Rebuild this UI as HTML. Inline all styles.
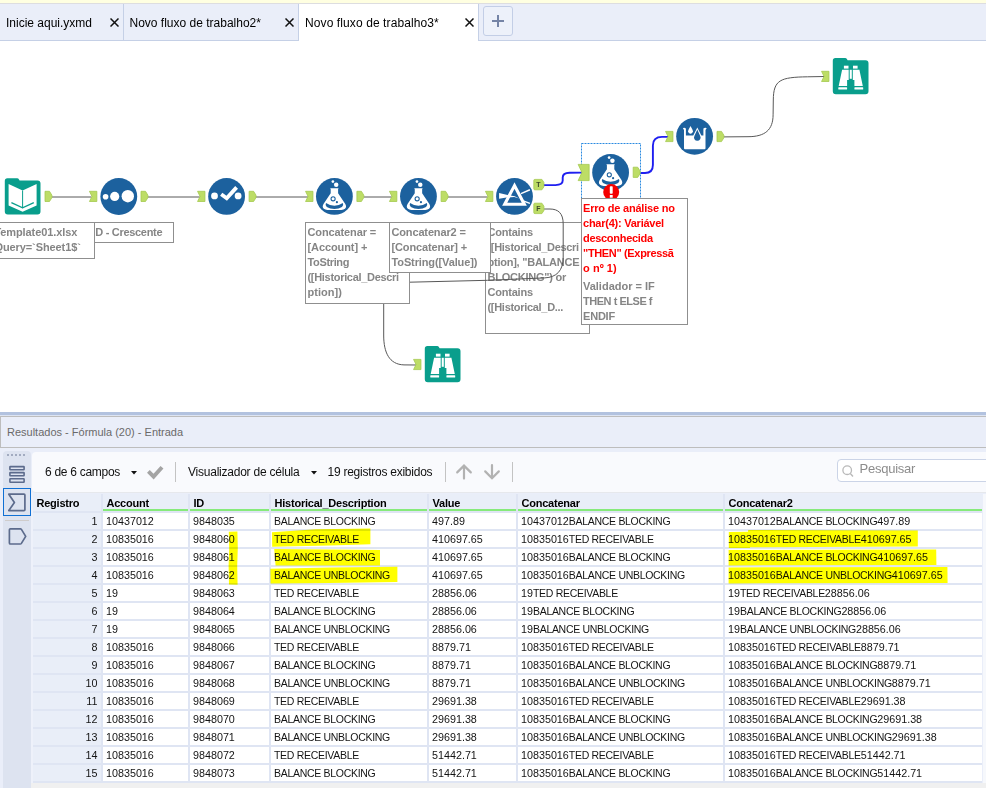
<!DOCTYPE html>
<html>
<head>
<meta charset="utf-8">
<title>Alteryx</title>
<style>
*{box-sizing:border-box;margin:0;padding:0}
html,body{width:986px;height:788px;overflow:hidden;background:#fff;font-family:"Liberation Sans",sans-serif;}
body{position:relative}
.abs{position:absolute}
/* top */
#ystrip{left:0;top:0;width:986px;height:3px;background:#ffffe1}
#tabbar{left:0;top:3px;width:986px;height:38px;background:#eaeef9;border-bottom:1px solid #c5d0e6;border-top:1px solid #dddde0}
.tab{top:4px;height:38px;font-size:12px;color:#000;line-height:38px;white-space:nowrap}
.tabx{top:18px;width:9px;height:9px}
/* canvas */
#canvas{left:0;top:41px;width:986px;height:371px;background:#fff;overflow:hidden}
.ann{position:absolute;background:#fff;border:1px solid #8f8f8f;font-weight:bold;font-size:11px;line-height:15px;color:#858585;white-space:nowrap;overflow:hidden;padding:2px 0 0 1.5px}
/* results */
#split{left:0;top:412px;width:986px;height:4px;background:#b2c2df;border-bottom:1px solid #dde4f2}
#rtitle{z-index:2;left:0;top:416px;width:990px;height:32px;background:#eaeef9;border:1px solid #bdbdbd;font-size:11px;color:#6a6a6a;line-height:30px;padding-left:6px;white-space:nowrap}
#rbody{left:0;top:447px;width:986px;height:341px;background:#eaeef9}
.tbtxt{font-size:12px;color:#111;white-space:nowrap;line-height:14px}
/* table */
.row{position:absolute;left:33px;height:16px;width:949px}
.c{position:absolute;top:0;height:16px;background:#fff;font-size:11px;line-height:16px;color:#141414;white-space:nowrap;overflow:hidden;padding-left:3px}
.c0{left:0;width:68px;background:#e9eef8;text-align:right;padding-right:3.5px;padding-left:0}
.c1{left:70px;width:85px}
.c2{left:157px;width:79px}
.c3{left:238px;width:156px}
.c4{left:396px;width:87px}
.c5{left:485px;width:205px}
.c6{left:692px;width:257px}
.c i{font-style:normal;letter-spacing:-0.3px;font-size:10.5px}
.c{font-size:10.75px}
.hd .c{font-size:11px;letter-spacing:-0.22px;color:#000;padding-top:1px;padding-left:3.5px;background:#e9eef8;font-weight:bold;height:17px;line-height:16px}
</style>
</head>
<body>
<div id="ystrip" class="abs"></div>
<div id="tabbar" class="abs"></div>
<div class="abs" style="left:123px;top:4px;width:1px;height:36px;background:#c5d0e6"></div>
<div class="abs" style="left:298px;top:4px;width:181px;height:37px;background:#fff;border-left:1px solid #c5d0e6;border-right:1px solid #c5d0e6"></div>
<div class="abs tab" style="left:6px">Inicie aqui.yxmd</div>
<div class="abs tab" style="left:129.5px">Novo fluxo de trabalho2*</div>
<div class="abs tab" style="left:305px;color:#000;letter-spacing:0.1px">Novo fluxo de trabalho3*</div>
<svg class="abs tabx" style="left:110px" viewBox="0 0 9 9"><path d="M0.5,0.5 L8.5,8.5 M8.5,0.5 L0.5,8.5" stroke="#111" stroke-width="1.5" fill="none"/></svg>
<svg class="abs tabx" style="left:285px" viewBox="0 0 9 9"><path d="M0.5,0.5 L8.5,8.5 M8.5,0.5 L0.5,8.5" stroke="#111" stroke-width="1.5" fill="none"/></svg>
<svg class="abs tabx" style="left:465px" viewBox="0 0 9 9"><path d="M0.5,0.5 L8.5,8.5 M8.5,0.5 L0.5,8.5" stroke="#111" stroke-width="1.5" fill="none"/></svg>
<div class="abs" style="left:483px;top:6px;width:30px;height:30px;border:1px solid #c3cee6;border-radius:3px;background:#edf1fa"></div>
<div class="abs" style="left:492px;top:20px;width:12px;height:2px;background:#7584a6"></div>
<div class="abs" style="left:497px;top:15px;width:2px;height:12px;background:#7584a6"></div>

<div id="canvas" class="abs">
<div class="abs" style="left:0;top:-41px;width:986px;height:453px">
<div class="ann" style="left:485px;top:222px;width:105px;height:112px;padding-left:1.5px"><span style="letter-spacing:-0.21px">Contains</span><br><span style="letter-spacing:-0.31px">([Historical_Descri</span><br><span style="letter-spacing:-0.24px">ption], "BALANCE</span><br><span style="letter-spacing:-0.24px">BLOCKING") or</span><br><span style="letter-spacing:-0.21px">Contains</span><br><span style="letter-spacing:-0.3px">([Historical_D...</span></div>
<svg class="abs" style="left:0;top:0" width="986" height="412" viewBox="0 0 986 412">
<g fill="none" stroke="#585858" stroke-width="1">
<path d="M51.9,197 L91.5,197"/>
<path d="M147.6,197 L199.8,197"/>
<path d="M255.9,197 L308,197"/>
<path d="M363.6,197 L391.8,197"/>
<path d="M448,197 L487.8,197"/>
<path d="M543.5,209 L550,209 C558,209.1 563.2,213 563.2,224 L563.2,257 C563.2,271 556.5,277.2 544.8,277.9 L487.6,280.3 L409.6,282.2 L400,282.5 C388,283 383.7,288 383.7,300 L383.7,336 C383.8,352 389,364.5 404,364.9 L416.5,365"/>
<path d="M723.7,136.9 L748,136.7 C765,136.7 773,130 773.1,114.8 L773.3,100 C773.5,80 780,77.2 807.6,76.8 L824.7,76.5"/>
</g>
<g fill="none" stroke="#1f1ff0" stroke-width="1.9">
<path d="M543.5,185.1 L555.5,185.1 Q562.7,185.1 562.7,180.6 L562.7,177.4 Q562.7,172.8 569.5,172.7 L581.7,172.6"/>
<path d="M639.8,173 L645,173 Q652.9,173 652.9,165 L652.9,145.5 Q652.9,136.9 662,136.9 L668.9,136.9"/>
</g>
</svg>
<div class="ann" style="left:94px;top:222px;width:80px;height:21px;padding-left:0;letter-spacing:-0.3px;text-indent:-2.5px">ID - Crescente</div>
<div class="ann" style="left:-8px;top:222px;width:103px;height:37px;padding-left:1.5px;letter-spacing:-0.1px">Template01.xlsx<br>Query=`Sheet1$`</div>
<div class="ann" style="left:305px;top:222px;width:105px;height:82px;"><span style="letter-spacing:-0.12px">Concatenar =</span><br><span style="letter-spacing:-0.09px">[Account] +</span><br><span style="letter-spacing:-0.35px">ToString</span><br><span style="letter-spacing:-0.31px">([Historical_Descri</span><br><span style="letter-spacing:0.03px">ption])</span></div>
<div class="ann" style="left:389px;top:222px;width:102px;height:51px;"><span style="letter-spacing:-0.15px">Concatenar2 =</span><br><span style="letter-spacing:-0.12px">[Concatenar] +</span><br><span style="letter-spacing:-0.12px">ToString([Value])</span></div>
<svg class="abs" style="left:0;top:0" width="986" height="412" viewBox="0 0 986 412">
<path d="M6.8,178.3 L17.1,178.3 Q18.4,178.3 19.0,179.4 L19.6,180.4 L37.5,180.4 Q40.5,180.4 40.5,183.4 L40.5,211.4 Q40.5,214.4 37.5,214.4 L7.8,214.4 Q4.8,214.4 4.8,211.4 L4.8,180.9 Q4.8,178.3 7.4,178.3 Z" fill="#099e8c"/>
<g><path d="M8.6,184 L22.6,190.5 L36.6,184 L36.6,205.6 L22.6,211.8 L8.6,205.6 Z" fill="#fff"/><path d="M22.6,190.5 L22.6,208.2" stroke="#099e8c" stroke-width="1" fill="none"/><path d="M11.4,202.6 L22.6,207.9 L33.8,202.6" stroke="#099e8c" stroke-width="1.3" fill="none"/></g>
<path d="M45.0,191.3 L49.50,191.3 L51.90,195.20000000000002 L51.90,197.6 L49.50,201.5 L45.0,201.5 Z" fill="#bddd66" stroke="#a5c94f" stroke-width="0.8"/>
<path d="M89.45,191.3 L96.85,191.3 L96.85,201.5 L89.45,201.5 L91.95,196.4 Z" fill="#bddd66" stroke="#a5c94f" stroke-width="0.8"/>
<circle cx="118.8" cy="196.5" r="18.4" fill="#1c619e"/>
<path d="M141.0,191.3 L145.50,191.3 L147.90,195.20000000000002 L147.90,197.6 L145.50,201.5 L141.0,201.5 Z" fill="#bddd66" stroke="#a5c94f" stroke-width="0.8"/>
<circle cx="105.6" cy="196.8" r="2.8" fill="#fff"/><circle cx="114.7" cy="196.4" r="4.6" fill="#fff"/><circle cx="127.8" cy="196.2" r="6.2" fill="#fff"/>
<path d="M197.55,191.3 L204.95,191.3 L204.95,201.5 L197.55,201.5 L200.05,196.4 Z" fill="#bddd66" stroke="#a5c94f" stroke-width="0.8"/>
<circle cx="226.6" cy="196.4" r="18.4" fill="#1c619e"/>
<path d="M249.1,191.3 L253.60,191.3 L256.00,195.20000000000002 L256.00,197.6 L253.60,201.5 L249.1,201.5 Z" fill="#bddd66" stroke="#a5c94f" stroke-width="0.8"/>
<circle cx="214.5" cy="195.9" r="3.4" fill="#fff"/><circle cx="238.1" cy="195.9" r="3.4" fill="#fff"/><path d="M221.2,194.3 L226.7,198.3 L236.6,187.4" fill="none" stroke="#fff" stroke-width="3.8"/>
<path d="M305.54999999999995,191.3 L312.95,191.3 L312.95,201.5 L305.54999999999995,201.5 L308.05,196.4 Z" fill="#bddd66" stroke="#a5c94f" stroke-width="0.8"/>
<circle cx="334.4" cy="196.4" r="18.4" fill="#1c619e"/>
<path d="M356.9,191.3 L361.40,191.3 L363.80,195.20000000000002 L363.80,197.6 L361.40,201.5 L356.9,201.5 Z" fill="#bddd66" stroke="#a5c94f" stroke-width="0.8"/>
<g transform="translate(334.4,196.4)">
<path d="M-4.2,-8.2 L4.2,-8.2 L3.7,-7.2 L3.7,-3.2 L10.9,7.6 Q12.6,10.6 10.6,12.4 Q9.2,13.5 7,13.5 L-7,13.5 Q-9.2,13.5 -10.6,12.4 Q-12.6,10.6 -10.9,7.6 L-3.7,-3.2 L-3.7,-7.2 Z" fill="#fff"/>
<path d="M-8.4,6.6 Q0,12.2 8.4,6.6 Q9.6,8.8 7.6,10.6 Q4.4,12.6 0,12.6 Q-4.4,12.6 -7.6,10.6 Q-9.6,8.8 -8.4,6.6 Z" fill="#1c619e"/>
<circle cx="-1.3" cy="2.4" r="2.05" fill="#fff" stroke="#1c619e" stroke-width="1.1"/>
<circle cx="2.5" cy="5.8" r="1.1" fill="#1c619e"/>
<circle cx="-1.5" cy="-14.8" r="1.35" fill="#fff"/>
<circle cx="1.8" cy="-11.6" r="2.25" fill="#fff"/>
</g>
<path d="M389.45,191.3 L396.85,191.3 L396.85,201.5 L389.45,201.5 L391.95,196.4 Z" fill="#bddd66" stroke="#a5c94f" stroke-width="0.8"/>
<circle cx="418.45" cy="196.4" r="18.4" fill="#1c619e"/>
<path d="M441.09999999999997,191.3 L445.60,191.3 L448.00,195.20000000000002 L448.00,197.6 L445.60,201.5 L441.09999999999997,201.5 Z" fill="#bddd66" stroke="#a5c94f" stroke-width="0.8"/>
<g transform="translate(418.45,196.4)">
<path d="M-4.2,-8.2 L4.2,-8.2 L3.7,-7.2 L3.7,-3.2 L10.9,7.6 Q12.6,10.6 10.6,12.4 Q9.2,13.5 7,13.5 L-7,13.5 Q-9.2,13.5 -10.6,12.4 Q-12.6,10.6 -10.9,7.6 L-3.7,-3.2 L-3.7,-7.2 Z" fill="#fff"/>
<path d="M-8.4,6.6 Q0,12.2 8.4,6.6 Q9.6,8.8 7.6,10.6 Q4.4,12.6 0,12.6 Q-4.4,12.6 -7.6,10.6 Q-9.6,8.8 -8.4,6.6 Z" fill="#1c619e"/>
<circle cx="-1.3" cy="2.4" r="2.05" fill="#fff" stroke="#1c619e" stroke-width="1.1"/>
<circle cx="2.5" cy="5.8" r="1.1" fill="#1c619e"/>
<circle cx="-1.5" cy="-14.8" r="1.35" fill="#fff"/>
<circle cx="1.8" cy="-11.6" r="2.25" fill="#fff"/>
</g>
<path d="M485.45,191.3 L492.85,191.3 L492.85,201.5 L485.45,201.5 L487.95,196.4 Z" fill="#bddd66" stroke="#a5c94f" stroke-width="0.8"/>
<circle cx="514.5" cy="196.4" r="18.4" fill="#1c619e"/>
<path d="M514.5,185.6 L504.7,204.2 L524.3,204.2 Z" fill="none" stroke="#fff" stroke-width="3.1" stroke-linejoin="miter"/>
<path d="M499.1,193 L507.6,194.9 L514.6,196.2 L519.2,198.4 L514.2,196.9 L506.4,197.6 L499.1,198.8 Z" fill="#fff"/>
<path d="M521,193.6 L529.9,189.7 M523.2,200.9 L529.9,203.4" stroke="#fff" stroke-width="1.5" fill="none"/>
<path d="M534.8,179.4 L541.90,179.4 L543.90,182.40 L543.90,186.80 L541.90,189.79999999999998 L534.8,189.79999999999998 Q533.8,189.79999999999998 533.8,188.79999999999998 L533.8,180.4 Q533.8,179.4 534.8,179.4 Z" fill="#bddd66" stroke="#a5c94f" stroke-width="0.8"/><text x="538.5" y="186.79999999999998" font-family="Liberation Sans" font-weight="bold" font-size="7" fill="#3b4729" text-anchor="middle">T</text>
<path d="M534.8,203.20000000000002 L541.90,203.20000000000002 L543.90,206.20 L543.90,210.60 L541.90,213.6 L534.8,213.6 Q533.8,213.6 533.8,212.6 L533.8,204.20000000000002 Q533.8,203.20000000000002 534.8,203.20000000000002 Z" fill="#bddd66" stroke="#a5c94f" stroke-width="0.8"/><text x="538.5" y="210.6" font-family="Liberation Sans" font-weight="bold" font-size="7" fill="#3b4729" text-anchor="middle">F</text>
<rect x="581.5" y="143.5" width="59" height="60" fill="none" stroke="#2a8ae0" stroke-width="1" stroke-dasharray="2,1"/>
<path d="M578.15,164.4 L589.15,164.4 L589.15,180.6 L578.15,180.6 L581.95,172.5 Z" fill="#bddd66" stroke="#a5c94f" stroke-width="0.8"/>
<circle cx="610.6" cy="172.4" r="18.4" fill="#1c619e"/>
<path d="M633.2,167.20000000000002 L637.70,167.20000000000002 L640.10,171.10000000000002 L640.10,173.5 L637.70,177.4 L633.2,177.4 Z" fill="#bddd66" stroke="#a5c94f" stroke-width="0.8"/>
<g transform="translate(610.6,172.4)">
<path d="M-4.2,-8.2 L4.2,-8.2 L3.7,-7.2 L3.7,-3.2 L10.9,7.6 Q12.6,10.6 10.6,12.4 Q9.2,13.5 7,13.5 L-7,13.5 Q-9.2,13.5 -10.6,12.4 Q-12.6,10.6 -10.9,7.6 L-3.7,-3.2 L-3.7,-7.2 Z" fill="#fff"/>
<path d="M-8.4,6.6 Q0,12.2 8.4,6.6 Q9.6,8.8 7.6,10.6 Q4.4,12.6 0,12.6 Q-4.4,12.6 -7.6,10.6 Q-9.6,8.8 -8.4,6.6 Z" fill="#1c619e"/>
<circle cx="-1.3" cy="2.4" r="2.05" fill="#fff" stroke="#1c619e" stroke-width="1.1"/>
<circle cx="2.5" cy="5.8" r="1.1" fill="#1c619e"/>
<circle cx="-1.5" cy="-14.8" r="1.35" fill="#fff"/>
<circle cx="1.8" cy="-11.6" r="2.25" fill="#fff"/>
</g>
<circle cx="611.2" cy="192.1" r="8" fill="#f40000"/><rect x="609.8" y="186.2" width="2.9" height="7.6" rx="0.7" fill="#fff"/><rect x="609.8" y="195" width="2.9" height="2.7" fill="#fff"/>
<path d="M665.55,131.4 L672.95,131.4 L672.95,141.6 L665.55,141.6 L668.05,136.5 Z" fill="#bddd66" stroke="#a5c94f" stroke-width="0.8"/>
<circle cx="694.6" cy="136.3" r="18.4" fill="#1c619e"/>
<path d="M717.0,131.4 L721.50,131.4 L723.90,135.3 L723.90,137.7 L721.50,141.6 L717.0,141.6 Z" fill="#bddd66" stroke="#a5c94f" stroke-width="0.8"/>
<path d="M682.9,128.3 Q683.5,127.6 684.4,127.8 L685.9,128.6 L685.9,135.5 L703.4,135.5 L703.4,128.6 L705,127.8 Q706,127.6 706.7,128.3 L705.5,129.9 L705.5,148.2 Q705.5,149.2 704.5,149.2 L685,149.2 Q684,149.2 684,148.2 L684,129.9 Z" fill="#fff"/>
<path d="M690.5,126 L692.5,129.8 A2.45,2.45 0 1 1 688.5,129.8 Z" fill="#fff"/>
<path d="M697.3,127.4 L701.2,135.3 A4.4,4.4 0 1 1 693.4,135.3 Z" fill="#fff"/>
<path d="M697.3,129.4 L700.2,135.9 A3.3,3.3 0 1 1 694.4,135.9 Z" fill="#1c619e"/>
<path d="M821.55,71.30000000000001 L828.95,71.30000000000001 L828.95,81.5 L821.55,81.5 L824.05,76.4 Z" fill="#bddd66" stroke="#a5c94f" stroke-width="0.8"/>
<path d="M834.8,58.1 L845.0999999999999,58.1 Q846.4,58.1 847.0,59.2 L847.5999999999999,60.2 L865.5,60.2 Q868.5,60.2 868.5,63.2 L868.5,91.2 Q868.5,94.2 865.5,94.2 L835.8,94.2 Q832.8,94.2 832.8,91.2 L832.8,60.7 Q832.8,58.1 835.4,58.1 Z" fill="#099e8c"/>
<g transform="translate(832.8,58.1)" fill="#fff"><rect x="11.1" y="7.6" width="4.6" height="2.9"/><rect x="20.2" y="7.6" width="4.6" height="2.9"/><path d="M9.3,11.7 L15.9,11.7 L15.9,21.9 L14.3,21.9 L14.3,27.8 L5.9,27.8 Z"/><path d="M26.6,11.7 L20,11.7 L20,21.9 L21.6,21.9 L21.6,27.8 L30,27.8 Z"/><rect x="16.9" y="11.7" width="2.1" height="9"/><rect x="5.5" y="29.1" width="8.8" height="2.3" rx="0.6"/><rect x="21.6" y="29.1" width="8.8" height="2.3" rx="0.6"/></g>
<path d="M413.54999999999995,359.4 L420.95,359.4 L420.95,369.6 L413.54999999999995,369.6 L416.05,364.5 Z" fill="#bddd66" stroke="#a5c94f" stroke-width="0.8"/>
<path d="M426.8,346.1 L437.1,346.1 Q438.40000000000003,346.1 439.0,347.20000000000005 L439.6,348.20000000000005 L457.5,348.20000000000005 Q460.5,348.20000000000005 460.5,351.20000000000005 L460.5,379.20000000000005 Q460.5,382.20000000000005 457.5,382.20000000000005 L427.8,382.20000000000005 Q424.8,382.20000000000005 424.8,379.20000000000005 L424.8,348.70000000000005 Q424.8,346.1 427.40000000000003,346.1 Z" fill="#099e8c"/>
<g transform="translate(424.8,346.1)" fill="#fff"><rect x="11.1" y="7.6" width="4.6" height="2.9"/><rect x="20.2" y="7.6" width="4.6" height="2.9"/><path d="M9.3,11.7 L15.9,11.7 L15.9,21.9 L14.3,21.9 L14.3,27.8 L5.9,27.8 Z"/><path d="M26.6,11.7 L20,11.7 L20,21.9 L21.6,21.9 L21.6,27.8 L30,27.8 Z"/><rect x="16.9" y="11.7" width="2.1" height="9"/><rect x="5.5" y="29.1" width="8.8" height="2.3" rx="0.6"/><rect x="21.6" y="29.1" width="8.8" height="2.3" rx="0.6"/></g>
</svg>
<div class="ann" style="left:581px;top:198px;width:107px;height:127px;padding-top:2px;padding-left:1px"><span style="color:#f00"><span style="letter-spacing:-0.2px">Erro de análise no</span><br><span style="letter-spacing:-0.24px">char(4): Variável</span><br><span style="letter-spacing:-0.3px">desconhecida</span><br><span style="letter-spacing:-0.34px">"THEN" (Expressã</span><br><span style="letter-spacing:0.06px">o nº 1)</span></span><div style="margin-top:3px"><span style="letter-spacing:-0.01px">Validador = IF</span><br><span style="letter-spacing:-0.47px">THEN t ELSE f</span><br><span style="letter-spacing:-0.2px">ENDIF</span></div></div>
</div>

</div>
<div id="split" class="abs"></div>
<div id="rtitle" class="abs">Resultados - Fórmula (20) - Entrada</div>
<div id="rbody" class="abs">
<div class="abs" style="left:3px;top:4px;width:28px;height:337px;background:#dde3f0;border-radius:4px 4px 0 0"></div>
<div class="abs" style="left:7px;top:7px;width:2px;height:2px;background:#a2abc0"></div>
<div class="abs" style="left:11px;top:7px;width:2px;height:2px;background:#a2abc0"></div>
<div class="abs" style="left:15px;top:7px;width:2px;height:2px;background:#a2abc0"></div>
<div class="abs" style="left:19px;top:7px;width:2px;height:2px;background:#a2abc0"></div>
<div class="abs" style="left:23px;top:7px;width:2px;height:2px;background:#a2abc0"></div>
<svg class="abs" style="left:3px;top:4px" width="28" height="37" viewBox="3 451 28 37"><g fill="none" stroke="#5c6b8c" stroke-width="1.6"><rect x="9.9" y="466.6" width="14.2" height="3.2" rx="0.5"/><rect x="9.9" y="472.6" width="14.2" height="3.2" rx="0.5"/><rect x="9.9" y="478.8" width="14.2" height="3.4" rx="0.5"/></g></svg>
<div class="abs" style="left:3px;top:41px;width:28px;height:28px;border:1px solid #1070d4;background:#dde3f0"></div>
<svg class="abs" style="left:3px;top:41px" width="28" height="28" viewBox="3 488 28 28"><path d="M8.8,494.2 L24,494.2 Q24.9,494.2 24.9,495.1 L24.9,509.7 Q24.9,510.6 24,510.6 L8.8,510.6 L14.4,502.4 Z" fill="none" stroke="#5c6b8c" stroke-width="1.7" stroke-linejoin="round"/></svg>
<div class="abs" style="left:5px;top:73px;width:24px;height:1px;background:#cfcccb"></div>
<svg class="abs" style="left:3px;top:76px" width="28" height="28" viewBox="3 523 28 28"><path d="M10.4,528.8 L20.3,528.8 Q21,528.8 21.4,529.4 L25.7,536.4 L21.4,543.4 Q21,544 20.3,544 L10.4,544 Q9.4,544 9.4,543 L9.4,529.8 Q9.4,528.8 10.4,528.8 Z" fill="none" stroke="#5c6b8c" stroke-width="1.7" stroke-linejoin="round"/></svg>
<div class="abs" style="left:32px;top:5px;width:960px;height:41px;background:#f9fafd;border-radius:4px 0 0 4px;border-bottom:1px solid #e6e8ec"></div>
<div class="abs tbtxt" style="left:45px;top:18px;letter-spacing:-0.28px">6 de 6 campos</div>
<svg class="abs" style="left:130.7px;top:24px" width="6" height="4" viewBox="0 0 6 4"><path d="M0,0 L6,0 L3,3.6 Z" fill="#111"/></svg>
<svg class="abs" style="left:146px;top:18px" width="19" height="15" viewBox="146 465 19 15"><path d="M148.4,471.4 L153.6,476.6 L162,467.3" fill="none" stroke="#a4a4a4" stroke-width="3.9"/></svg>
<div class="abs" style="left:175px;top:15px;width:1px;height:20px;background:#c3c3c3"></div>
<div class="abs tbtxt" style="left:188px;top:18px;letter-spacing:-0.23px">Visualizador de célula</div>
<svg class="abs" style="left:310.8px;top:24px" width="6" height="4" viewBox="0 0 6 4"><path d="M0,0 L6,0 L3,3.6 Z" fill="#111"/></svg>
<div class="abs tbtxt" style="left:327.5px;top:18px;letter-spacing:-0.25px">19 registros exibidos</div>
<div class="abs" style="left:445px;top:15px;width:1px;height:20px;background:#c3c3c3"></div>
<svg class="abs" style="left:454px;top:16px" width="50" height="18" viewBox="454 463 50 18"><g fill="none" stroke="#b2b2b2" stroke-width="2.2" stroke-linecap="round"><path d="M464,478.6 L464,466 M457.2,472.4 L464,465.6 L470.8,472.4"/><path d="M492,465.2 L492,477.8 M485.2,471.4 L492,478.2 L498.8,471.4"/></g></svg>
<div class="abs" style="left:512px;top:15px;width:1px;height:20px;background:#c3c3c3"></div>
<div class="abs" style="left:837px;top:12px;width:160px;height:23px;background:#fff;border:1px solid #cbd4e7;border-radius:4px"></div>
<svg class="abs" style="left:841px;top:16px" width="14" height="14" viewBox="841 463 14 14"><circle cx="847.2" cy="470.2" r="4.3" fill="none" stroke="#b9b9b9" stroke-width="1.3"/><path d="M850.3,473.5 L853,476.4" stroke="#b9b9b9" stroke-width="1.4"/></svg>
<div class="abs" style="left:859.5px;top:14px;font-size:13px;line-height:15px;color:#8c8c8c;letter-spacing:-0.24px;white-space:nowrap">Pesquisar</div>
<div class="abs" style="left:31px;top:46px;width:2px;height:295px;background:#eef1fa"></div>
<div class="abs" style="left:33px;top:47px;width:949px;height:294px;background:#dfe5f3"></div>
<div class="row hd" style="top:47px;height:17px"><div class="c c0" style="text-align:left;padding-left:3.5px"><b>Registro</b></div><div class="c c1"><b>Account</b></div><div class="c c2"><b>ID</b></div><div class="c c3"><b>Historical_Description</b></div><div class="c c4"><b>Value</b></div><div class="c c5"><b>Concatenar</b></div><div class="c c6"><b>Concatenar2</b></div></div>
<div class="abs" style="left:103px;top:61.5px;width:85px;height:2.5px;background:#86ea7a"></div>
<div class="abs" style="left:190px;top:61.5px;width:79px;height:2.5px;background:#86ea7a"></div>
<div class="abs" style="left:271px;top:61.5px;width:156px;height:2.5px;background:#86ea7a"></div>
<div class="abs" style="left:429px;top:61.5px;width:87px;height:2.5px;background:#86ea7a"></div>
<div class="abs" style="left:518px;top:61.5px;width:205px;height:2.5px;background:#86ea7a"></div>
<div class="abs" style="left:725px;top:61.5px;width:257px;height:2.5px;background:#86ea7a"></div>
<div class="row" style="top:66px"><div class="c c0">1</div><div class="c c1">10437012</div><div class="c c2">9848035</div><div class="c c3"><i>BALANCE BLOCKING</i></div><div class="c c4">497.89</div><div class="c c5">10437012<i>BALANCE BLOCKING</i></div><div class="c c6">10437012<i>BALANCE BLOCKING</i>497.89</div></div>
<div class="row" style="top:84px"><div class="c c0">2</div><div class="c c1">10835016</div><div class="c c2">9848060</div><div class="c c3"><i>TED RECEIVABLE</i></div><div class="c c4">410697.65</div><div class="c c5">10835016<i>TED RECEIVABLE</i></div><div class="c c6">10835016<i>TED RECEIVABLE</i>410697.65</div></div>
<div class="row" style="top:102px"><div class="c c0">3</div><div class="c c1">10835016</div><div class="c c2">9848061</div><div class="c c3"><i>BALANCE BLOCKING</i></div><div class="c c4">410697.65</div><div class="c c5">10835016<i>BALANCE BLOCKING</i></div><div class="c c6">10835016<i>BALANCE BLOCKING</i>410697.65</div></div>
<div class="row" style="top:120px"><div class="c c0">4</div><div class="c c1">10835016</div><div class="c c2">9848062</div><div class="c c3"><i>BALANCE UNBLOCKING</i></div><div class="c c4">410697.65</div><div class="c c5">10835016<i>BALANCE UNBLOCKING</i></div><div class="c c6">10835016<i>BALANCE UNBLOCKING</i>410697.65</div></div>
<div class="row" style="top:138px"><div class="c c0">5</div><div class="c c1">19</div><div class="c c2">9848063</div><div class="c c3"><i>TED RECEIVABLE</i></div><div class="c c4">28856.06</div><div class="c c5">19<i>TED RECEIVABLE</i></div><div class="c c6">19<i>TED RECEIVABLE</i>28856.06</div></div>
<div class="row" style="top:156px"><div class="c c0">6</div><div class="c c1">19</div><div class="c c2">9848064</div><div class="c c3"><i>BALANCE BLOCKING</i></div><div class="c c4">28856.06</div><div class="c c5">19<i>BALANCE BLOCKING</i></div><div class="c c6">19<i>BALANCE BLOCKING</i>28856.06</div></div>
<div class="row" style="top:174px"><div class="c c0">7</div><div class="c c1">19</div><div class="c c2">9848065</div><div class="c c3"><i>BALANCE UNBLOCKING</i></div><div class="c c4">28856.06</div><div class="c c5">19<i>BALANCE UNBLOCKING</i></div><div class="c c6">19<i>BALANCE UNBLOCKING</i>28856.06</div></div>
<div class="row" style="top:192px"><div class="c c0">8</div><div class="c c1">10835016</div><div class="c c2">9848066</div><div class="c c3"><i>TED RECEIVABLE</i></div><div class="c c4">8879.71</div><div class="c c5">10835016<i>TED RECEIVABLE</i></div><div class="c c6">10835016<i>TED RECEIVABLE</i>8879.71</div></div>
<div class="row" style="top:210px"><div class="c c0">9</div><div class="c c1">10835016</div><div class="c c2">9848067</div><div class="c c3"><i>BALANCE BLOCKING</i></div><div class="c c4">8879.71</div><div class="c c5">10835016<i>BALANCE BLOCKING</i></div><div class="c c6">10835016<i>BALANCE BLOCKING</i>8879.71</div></div>
<div class="row" style="top:228px"><div class="c c0">10</div><div class="c c1">10835016</div><div class="c c2">9848068</div><div class="c c3"><i>BALANCE UNBLOCKING</i></div><div class="c c4">8879.71</div><div class="c c5">10835016<i>BALANCE UNBLOCKING</i></div><div class="c c6">10835016<i>BALANCE UNBLOCKING</i>8879.71</div></div>
<div class="row" style="top:246px"><div class="c c0">11</div><div class="c c1">10835016</div><div class="c c2">9848069</div><div class="c c3"><i>TED RECEIVABLE</i></div><div class="c c4">29691.38</div><div class="c c5">10835016<i>TED RECEIVABLE</i></div><div class="c c6">10835016<i>TED RECEIVABLE</i>29691.38</div></div>
<div class="row" style="top:264px"><div class="c c0">12</div><div class="c c1">10835016</div><div class="c c2">9848070</div><div class="c c3"><i>BALANCE BLOCKING</i></div><div class="c c4">29691.38</div><div class="c c5">10835016<i>BALANCE BLOCKING</i></div><div class="c c6">10835016<i>BALANCE BLOCKING</i>29691.38</div></div>
<div class="row" style="top:282px"><div class="c c0">13</div><div class="c c1">10835016</div><div class="c c2">9848071</div><div class="c c3"><i>BALANCE UNBLOCKING</i></div><div class="c c4">29691.38</div><div class="c c5">10835016<i>BALANCE UNBLOCKING</i></div><div class="c c6">10835016<i>BALANCE UNBLOCKING</i>29691.38</div></div>
<div class="row" style="top:300px"><div class="c c0">14</div><div class="c c1">10835016</div><div class="c c2">9848072</div><div class="c c3"><i>TED RECEIVABLE</i></div><div class="c c4">51442.71</div><div class="c c5">10835016<i>TED RECEIVABLE</i></div><div class="c c6">10835016<i>TED RECEIVABLE</i>51442.71</div></div>
<div class="row" style="top:318px"><div class="c c0">15</div><div class="c c1">10835016</div><div class="c c2">9848073</div><div class="c c3"><i>BALANCE BLOCKING</i></div><div class="c c4">51442.71</div><div class="c c5">10835016<i>BALANCE BLOCKING</i></div><div class="c c6">10835016<i>BALANCE BLOCKING</i>51442.71</div></div>
<div class="abs" style="left:983px;top:47px;width:3px;height:289px;background:#f6f8fc"></div>
<div class="abs" style="left:31px;top:336px;width:955px;height:5px;background:#f0f0f0"></div>

</div>
<svg class="abs" style="left:0;top:0;mix-blend-mode:multiply;pointer-events:none" width="986" height="788" viewBox="0 0 986 788"><g fill="#ffff00">
<path d="M228.8,531.8 L237.4,531.5 L237.8,548 L237.2,566 L237.6,584.8 L229,584.6 L228.6,566 L229.2,548 Z"/>
<path d="M272,532.2 L316,529.3 L370.4,528.4 L370.4,544.3 L330,545.6 L272.2,546.8 Z"/>
<path d="M274.2,549 L330,549.4 L380,550 L380,565.4 L330,565.6 L275.6,565.6 Z"/>
<path d="M270.4,568.8 L330,567.6 L397.4,566.8 L397.4,582 L330,583 L270.6,583.5 Z"/>
<path d="M728.8,531.9 L748,531.8 L748.2,530 L917.8,530.4 L917.8,546.4 L750,547.2 L750,548 L728.8,548 Z"/>
<path d="M728.6,550 L936.2,549.6 L936.4,565 L728.6,565.4 Z"/>
<path d="M728.6,567.4 L947.4,567 L947.6,583 L728.6,583.4 Z"/>
</g></svg>
</body>
</html>
